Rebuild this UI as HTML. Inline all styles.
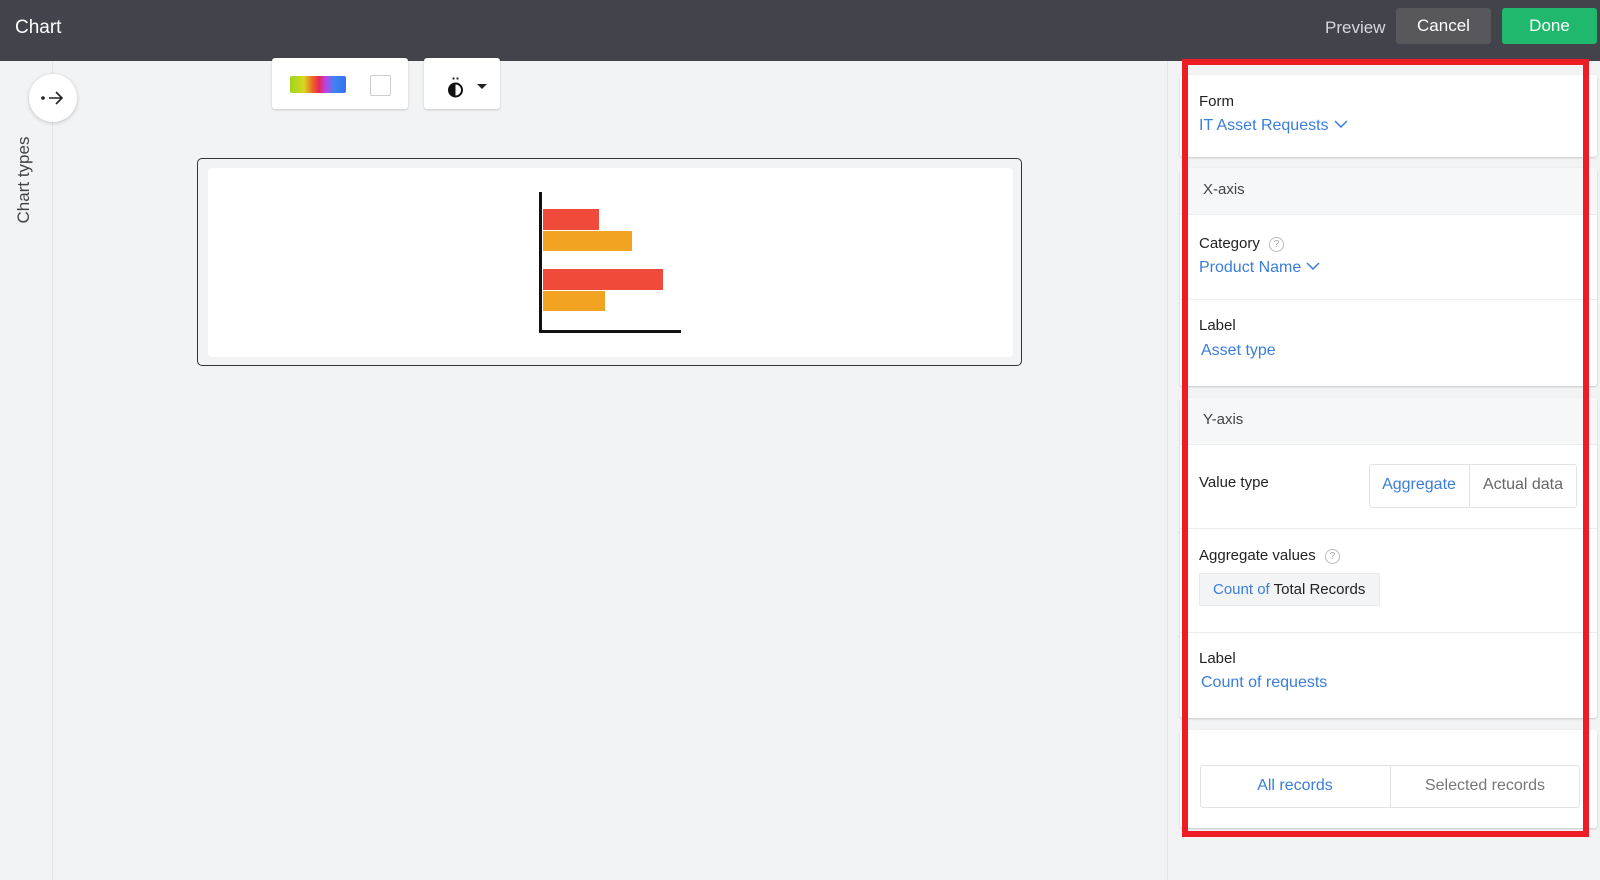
<!DOCTYPE html>
<html><head><meta charset="utf-8"><style>
*{box-sizing:border-box;margin:0;padding:0}
body{width:1600px;height:880px;overflow:hidden;background:#f2f3f5;font-family:"Liberation Sans",sans-serif;position:relative;color:#222}
.a{position:absolute}
.hdr{left:0;top:0;width:1600px;height:61px;background:#42434b}
.blue{color:#3a7ddb}
.card{background:#fff;border-radius:3px;box-shadow:0 1px 2px rgba(0,0,0,.18)}
.lbl{font-size:15px;color:#222}
.val{font-size:16px;color:#3a7ddb}
.div{height:1px;background:#ebecee}
.chev{display:inline-block;vertical-align:2px;margin-left:5px}
</style></head><body>
<div class="a hdr"></div>
<div class="a" style="left:15px;top:17px;font-size:19px;color:#fff">Chart</div>
<div class="a" style="left:1325px;top:18px;font-size:17px;color:#d8d8dc">Preview</div>
<div class="a" style="left:1396px;top:8px;width:95px;height:36px;background:#58585c;border-radius:3px;color:#fff;font-size:17px;text-align:center;line-height:36px">Cancel</div>
<div class="a" style="left:1502px;top:8px;width:95px;height:36px;background:#1fb86c;border-radius:3px;color:#fff;font-size:17px;text-align:center;line-height:36px">Done</div>

<div class="a" style="left:0;top:61px;width:53px;height:819px;border-right:1px solid #e4e5e8"></div>
<div class="a" style="left:29px;top:74px;width:48px;height:48px;border-radius:50%;background:#fff;box-shadow:0 1px 4px rgba(0,0,0,.2)"></div>
<svg class="a" style="left:39px;top:88px" width="26" height="20"><circle cx="4" cy="10" r="1.8" fill="#222"/><path d="M10 10H23M17 4L23 10L17 16" stroke="#222" stroke-width="1.6" fill="none"/></svg>
<div class="a" style="left:24px;top:180px;transform:translate(-50%,-50%) rotate(-90deg);font-size:17px;color:#444;white-space:nowrap">Chart types</div>

<div class="a card" style="left:272px;top:58px;width:136px;height:51px"></div>
<div class="a" style="left:290px;top:76px;width:56px;height:17px;border-radius:2px;background:linear-gradient(90deg,#9ed61c,#d8d820 25%,#f05a28 42%,#e8285a 52%,#b844e8 64%,#3a86f0 80%,#3a6ef0)"></div>
<div class="a" style="left:370px;top:75px;width:21px;height:21px;border:1px solid #ccc;border-radius:2px;background:#fff"></div>
<div class="a card" style="left:424px;top:58px;width:76px;height:51px"></div>
<svg class="a" style="left:447px;top:76px" width="20" height="24"><circle cx="6.5" cy="2.5" r="1.1" fill="#222"/><circle cx="10.5" cy="2.5" r="1.1" fill="#222"/><circle cx="8.5" cy="14" r="6.5" fill="#fff" stroke="#111" stroke-width="2"/><path d="M8.5 7.5A6.5 6.5 0 0 0 8.5 20.5Z" fill="#111"/></svg>
<div class="a" style="left:477px;top:84px;width:0;height:0;border-left:5px solid transparent;border-right:5px solid transparent;border-top:5px solid #222"></div>

<div class="a" style="left:197px;top:158px;width:825px;height:208px;border:1.5px solid #333;border-radius:5px;background:#f2f3f5"></div>
<div class="a" style="left:208px;top:168px;width:805px;height:189px;background:#fff;border-radius:4px"></div>
<div class="a" style="left:543px;top:209px;width:56px;height:21px;background:#ef4a3a"></div>
<div class="a" style="left:543px;top:231px;width:89px;height:20px;background:#f2a321"></div>
<div class="a" style="left:543px;top:269px;width:120px;height:21px;background:#ef4a3a"></div>
<div class="a" style="left:543px;top:291px;width:62px;height:20px;background:#f2a321"></div>
<div class="a" style="left:539px;top:192px;width:3px;height:141px;background:#111"></div>
<div class="a" style="left:539px;top:330px;width:142px;height:3px;background:#111"></div>

<div class="a" style="left:1167px;top:61px;width:433px;height:819px;border-left:1px solid #e4e5e8;background:#f2f3f5"></div>
<div class="a card" style="left:1180px;top:75px;width:417px;height:82px"></div>
<div class="a lbl" style="left:1199px;top:93px">Form</div>
<div class="a val" style="left:1199px;top:117px">IT Asset Requests<svg class="chev" width="14" height="8"><path d="M1 1L7 7L13 1" stroke="#3a7ddb" stroke-width="1.5" fill="none"/></svg></div>

<div class="a card" style="left:1180px;top:168px;width:417px;height:218px"></div>
<div class="a" style="left:1180px;top:168px;width:417px;height:47px;background:#f6f7f8;border-bottom:1px solid #ebecee"></div>
<div class="a lbl" style="left:1203px;top:181px;color:#444">X-axis</div>
<div class="a lbl" style="left:1199px;top:235px">Category <span style="display:inline-block;width:15px;height:15px;border:1px solid #bbb;border-radius:50%;font-size:10px;color:#aaa;text-align:center;line-height:13px;margin-left:5px;vertical-align:1px">?</span></div>
<div class="a val" style="left:1199px;top:259px">Product Name<svg class="chev" width="14" height="8"><path d="M1 1L7 7L13 1" stroke="#3a7ddb" stroke-width="1.5" fill="none"/></svg></div>
<div class="a div" style="left:1180px;top:299px;width:417px"></div>
<div class="a lbl" style="left:1199px;top:317px">Label</div>
<div class="a val" style="left:1201px;top:342px">Asset type</div>

<div class="a card" style="left:1180px;top:398px;width:417px;height:320px"></div>
<div class="a" style="left:1180px;top:398px;width:417px;height:47px;background:#f6f7f8;border-bottom:1px solid #ebecee"></div>
<div class="a lbl" style="left:1203px;top:411px;color:#444">Y-axis</div>
<div class="a lbl" style="left:1199px;top:474px">Value type</div>
<div class="a" style="left:1369px;top:464px;width:208px;height:44px;border:1px solid #e2e3e6;border-radius:3px"></div>
<div class="a" style="left:1469px;top:464px;width:1px;height:44px;background:#e2e3e6"></div>
<div class="a val" style="left:1369px;top:476px;width:100px;text-align:center">Aggregate</div>
<div class="a" style="left:1469px;top:476px;width:108px;text-align:center;font-size:16px;color:#666">Actual data</div>
<div class="a div" style="left:1180px;top:528px;width:417px"></div>
<div class="a lbl" style="left:1199px;top:547px">Aggregate values <span style="display:inline-block;width:15px;height:15px;border:1px solid #bbb;border-radius:50%;font-size:10px;color:#aaa;text-align:center;line-height:13px;margin-left:5px;vertical-align:1px">?</span></div>
<div class="a" style="left:1199px;top:573px;width:181px;height:33px;background:#f3f4f5;border:1px solid #e8e9eb;border-radius:2px;font-size:15px;line-height:31px;padding-left:13px"><span class="blue">Count of</span> Total Records</div>
<div class="a div" style="left:1180px;top:632px;width:417px"></div>
<div class="a lbl" style="left:1199px;top:650px">Label</div>
<div class="a val" style="left:1201px;top:674px">Count of requests</div>

<div class="a card" style="left:1180px;top:730px;width:417px;height:98px"></div>
<div class="a" style="left:1200px;top:765px;width:380px;height:43px;border:1px solid #e2e3e6;border-radius:3px"></div>
<div class="a" style="left:1390px;top:765px;width:1px;height:43px;background:#e2e3e6"></div>
<div class="a val" style="left:1200px;top:777px;width:190px;text-align:center">All records</div>
<div class="a" style="left:1390px;top:777px;width:190px;text-align:center;font-size:16px;color:#777">Selected records</div>

<div class="a" style="left:1182px;top:59px;width:407px;height:778px;border:6px solid #ee1c25"></div>
</body></html>
